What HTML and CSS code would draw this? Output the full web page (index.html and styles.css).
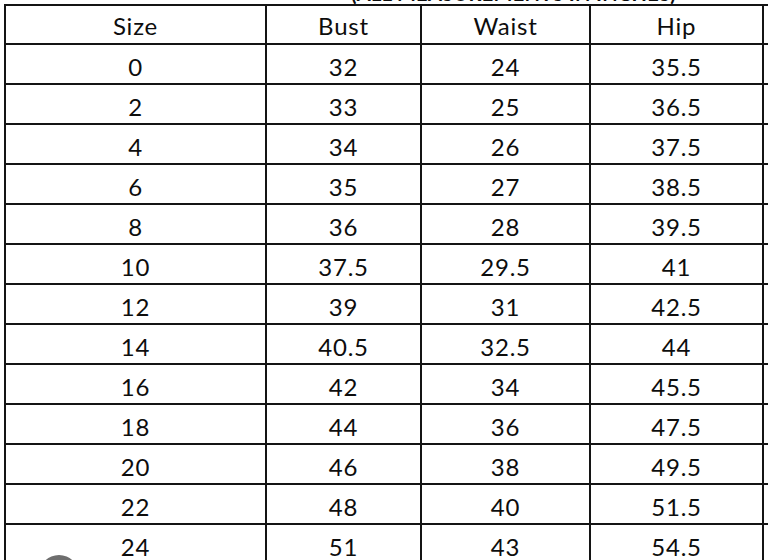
FILE: index.html
```html
<!DOCTYPE html>
<html>
<head>
<meta charset="utf-8">
<link rel="stylesheet" href="styles.css">
</head>
<body>
<div class="page">
  <div class="title-row"><div class="title">(ALL MEASUREMENTS IN INCHES)</div></div>
  <table class="chart">
    <colgroup>
      <col class="c-size"><col class="c-bust"><col class="c-waist"><col class="c-hip"><col class="c-extra">
    </colgroup>
    <thead>
      <tr><th>Size</th><th>Bust</th><th>Waist</th><th>Hip</th><th></th></tr>
    </thead>
    <tbody>
      <tr><td>0</td><td>32</td><td>24</td><td>35.5</td><td></td></tr>
      <tr><td>2</td><td>33</td><td>25</td><td>36.5</td><td></td></tr>
      <tr><td>4</td><td>34</td><td>26</td><td>37.5</td><td></td></tr>
      <tr><td>6</td><td>35</td><td>27</td><td>38.5</td><td></td></tr>
      <tr><td>8</td><td>36</td><td>28</td><td>39.5</td><td></td></tr>
      <tr><td>10</td><td>37.5</td><td>29.5</td><td>41</td><td></td></tr>
      <tr><td>12</td><td>39</td><td>31</td><td>42.5</td><td></td></tr>
      <tr><td>14</td><td>40.5</td><td>32.5</td><td>44</td><td></td></tr>
      <tr><td>16</td><td>42</td><td>34</td><td>45.5</td><td></td></tr>
      <tr><td>18</td><td>44</td><td>36</td><td>47.5</td><td></td></tr>
      <tr><td>20</td><td>46</td><td>38</td><td>49.5</td><td></td></tr>
      <tr><td>22</td><td>48</td><td>40</td><td>51.5</td><td></td></tr>
      <tr><td>24</td><td>51</td><td>43</td><td>54.5</td><td></td></tr>
    </tbody>
  </table>
</div>
<div class="fab"></div>
</body>
</html>
```
FILE: styles.css
```css
html, body {
  margin: 0;
  padding: 0;
  background: #ffffff;
  overflow: hidden;
  width: 768px;
  height: 560px;
}
body {
  font-family: Lato, "Open Sans", sans-serif;
  color: #0d0d0d;
  position: relative;
}
.page {
  padding-left: 4px;
  width: 900px;
}
.title-row {
  display: flex;
  margin-top: -21px;
  margin-bottom: -3px;
  height: 28px;
}
.title {
  margin-left: 261px;
  width: 497px;
  text-align: center;
  font-weight: 700;
  font-size: 20px;
  line-height: 28px;
  letter-spacing: 0.3px;
}
.chart {
  border-collapse: collapse;
  table-layout: fixed;
  width: 860px;
}
.c-size { width: 261px; }
.c-bust { width: 155px; }
.c-waist { width: 169px; }
.c-hip { width: 173px; }
.c-extra { width: 102px; }
.chart th,
.chart td {
  border: 2px solid #141414;
  text-align: center;
  font-size: 24px;
  font-weight: 400;
  letter-spacing: 0.8px;
  line-height: 28px;
  padding: 8px 0 2px;
  height: 28px;
}
.chart th {
  padding: 6px 0 3px;
}
.fab {
  position: absolute;
  left: 39px;
  top: 555px;
  width: 40px;
  height: 40px;
  border-radius: 50%;
  background: #6e6e6e;
}
```
